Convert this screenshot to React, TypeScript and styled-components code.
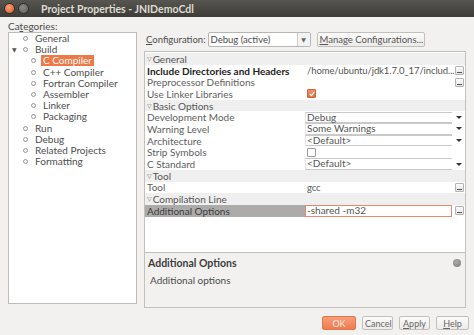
import styled, { createGlobalStyle, css } from "styled-components";

const GlobalStyle = createGlobalStyle`
  html, body {
    margin: 0;
    padding: 0;
    background: #f2f1f0;
  }
  body {
    font-family: Lato, "Open Sans", "DejaVu Sans", sans-serif;
    font-size: 9.5px;
    color: #4c4c4c;
  }
`;

const Window = styled.div`
  width: 474px;
  height: 335px;
  display: flex;
  flex-direction: column;
  background: #f2f1f0;
  overflow: hidden;
`;

const TitleBar = styled.div`
  height: 17px;
  flex-shrink: 0;
  display: flex;
  align-items: center;
  gap: 3px;
  padding-left: 4px;
  background: linear-gradient(#56554f, #3d3c38);
  color: #dfdbd2;
`;

const WinButton = styled.span<{ $close?: boolean }>`
  width: 9px;
  height: 9px;
  border-radius: 50%;
  background: ${(p) =>
    p.$close
      ? "radial-gradient(circle at 40% 35%, #f7a074, #e0582a)"
      : "radial-gradient(circle at 40% 35%, #8d8b85, #5f5d58)"};
  border: 1px solid #2e2d2a;
`;

const Title = styled.span`
  margin-left: 9px;
  font-weight: bold;
  font-size: 10.5px;
`;

const Content = styled.div`
  display: flex;
  gap: 7px;
  padding: 3px 8px 0 8px;
`;

const LeftCol = styled.div`
  width: 129px;
  flex-shrink: 0;
  display: flex;
  flex-direction: column;
`;

const Label = styled.div`
  height: 12px;
  line-height: 12px;
  font-size: 10px;
`;

const Mn = styled.span`
  text-decoration: underline;
`;

const TreeBox = styled.div`
  height: 270px;
  background: #fff;
  border: 1px solid #bfbdba;
`;

const TreeItem = styled.div<{ $level: number }>`
  height: 11.2px;
  display: flex;
  align-items: center;
  padding-left: ${(p) => 14 + p.$level * 8}px;
  position: relative;
  font-size: 10px;
  color: #4e4e4e;
`;

const Expander = styled.span`
  position: absolute;
  left: 3px;
  font-size: 6px;
  color: #555;
`;

const Bullet = styled.span`
  width: 3px;
  height: 3px;
  border-radius: 50%;
  border: 1px solid #9a9a9a;
  margin-right: 5px;
`;

const ItemText = styled.span<{ $selected?: boolean }>`
  padding: 0 2px;
  line-height: 11px;
  ${(p) =>
    p.$selected &&
    css`
      background: #f07746;
      color: #fff;
    `}
`;

const RightCol = styled.div`
  flex: 1;
  min-width: 0;
  display: flex;
  flex-direction: column;
  padding-top: 12px;
`;

const ConfigRow = styled.div`
  height: 15px;
  display: flex;
  align-items: center;
  padding-left: 2px;
  font-size: 9.5px;
  white-space: nowrap;
`;

const Combo = styled.div`
  margin-left: 2px;
  width: 101px;
  height: 13px;
  flex-shrink: 0;
  display: flex;
  background: #fff;
  border: 1px solid #b8b6b3;
  border-radius: 2px;
`;

const ComboText = styled.span`
  flex: 1;
  padding-left: 2px;
  line-height: 13px;
`;

const ComboArrow = styled.span`
  width: 12px;
  border-left: 1px solid #cfcdca;
  background: #f3f3f3;
  display: flex;
  align-items: center;
  justify-content: center;
  font-size: 6px;
  color: #666;
`;

const Button = styled.button<{ $primary?: boolean }>`
  height: 15px;
  padding: 0 2px;
  font-family: inherit;
  font-size: 10px;
  color: #555;
  white-space: nowrap;
  border: 1px solid #c2c0bd;
  border-radius: 2px;
  background: linear-gradient(#fbfbfa, #ecebe9);
  ${(p) =>
    p.$primary &&
    css`
      color: #fde9df;
      border-color: #e2764d;
      background: linear-gradient(#f6a07b, #ef7b4f);
    `}
`;

const ManageButton = styled(Button)`
  margin-left: 6px;
  width: 108px;
  flex-shrink: 0;
  font-size: 9.5px;
`;

const Sheet = styled.div`
  margin-top: 4px;
  height: 199px;
  background: #fff;
  border: 1px solid #c3c1be;
  padding-top: 1px;
`;

const Row = styled.div<{ $kind?: "header" | "selected" }>`
  height: 11.7px;
  display: grid;
  grid-template-columns: 160px 148px 1fr;
  align-items: center;
  background: ${(p) => (p.$kind === "header" ? "#efefef" : "#fff")};
`;

const NameCell = styled.div<{ $bold?: boolean; $selected?: boolean }>`
  height: 100%;
  display: flex;
  align-items: center;
  padding-left: 2px;
  font-size: 10px;
  color: ${(p) => (p.$bold ? "#222" : "#5e5e5e")};
  font-weight: ${(p) => (p.$bold ? "bold" : "normal")};
  white-space: nowrap;
  overflow: hidden;
  ${(p) =>
    p.$selected &&
    css`
      background: #acabaa;
      color: #3a3a3a;
    `}
`;

const HeaderCell = styled.div`
  grid-column: 1 / 4;
  padding-left: 2px;
  font-size: 10px;
  color: #555;
`;

const Tri = styled.span`
  font-size: 6px;
  margin-right: 1px;
  position: relative;
  top: -2px;
  color: #777;
`;

const ValueText = styled.div`
  padding-left: 2px;
  font-size: 9.5px;
  letter-spacing: -0.1px;
  color: #555;
  white-space: nowrap;
`;

const ValueCombo = styled.div`
  height: 9.5px;
  line-height: 9.5px;
  border-top: 1px solid #c9c9c9;
  border-bottom: 1px solid #c9c9c9;
  border-left: 1px solid #e4e4e4;
  margin-right: 1px;
  padding-left: 1px;
  font-size: 10px;
  color: #555;
`;

const ValueField = styled.div`
  height: 9.5px;
  line-height: 9.5px;
  border: 1px solid #e58b6c;
  margin-right: 1px;
  padding-left: 1px;
  font-size: 10px;
  color: #555;
`;

const EndCell = styled.div`
  display: flex;
  justify-content: center;
  align-items: center;
`;

const Ellipsis = styled.span`
  width: 7px;
  height: 7px;
  border: 1px solid #b4b4b4;
  border-radius: 1px;
  background: linear-gradient(#fafafa, #e4e4e4);
  display: flex;
  align-items: flex-end;
  justify-content: center;
  &::after {
    content: "";
    width: 5px;
    height: 1px;
    margin-bottom: 1px;
    background: #555;
  }
`;

const DropArrow = styled.span`
  width: 0;
  height: 0;
  border-left: 3px solid transparent;
  border-right: 3px solid transparent;
  border-top: 3px solid #333;
`;

const Check = styled.span<{ $checked?: boolean }>`
  margin-left: 2px;
  width: 7px;
  height: 7px;
  border: 1px solid ${(p) => (p.$checked ? "#c9663f" : "#9c9c9c")};
  border-radius: 1px;
  background: ${(p) => (p.$checked ? "linear-gradient(#f29270, #e36d45)" : "#fff")};
  display: flex;
  align-items: center;
  justify-content: center;
`;

const Desc = styled.div`
  height: 50px;
  border: 1px solid #c3c1be;
  border-top: none;
  display: flex;
  justify-content: space-between;
  padding: 4px 4px 0 3px;
`;

const DescTitle = styled.div`
  font-weight: bold;
  font-size: 10.5px;
  color: #3c3c3c;
`;

const DescText = styled.div`
  margin-top: 5px;
  padding-left: 2px;
  font-size: 10px;
  color: #4c4c4c;
`;

const HelpDot = styled.span`
  width: 8px;
  height: 8px;
  margin-top: 2px;
  border-radius: 50%;
  background: radial-gradient(circle at 40% 35%, #aaa, #7b7b7b);
`;

const Footer = styled.div`
  flex: 1;
  display: flex;
  justify-content: flex-end;
  align-items: flex-end;
  gap: 6px;
  padding: 0 5px 5px 0;
`;

const FooterButton = styled(Button)<{ $w: number }>`
  height: 14px;
  width: ${(p) => p.$w}px;
  font-size: 9px;
  color: #666;
  ${(p) =>
    p.$primary &&
    css`
      color: #fde9df;
    `}
`;

type Prop =
  | { kind: "header"; name: string }
  | {
      kind: "prop";
      name: string;
      bold?: boolean;
      selected?: boolean;
      value?: string;
      type: "text" | "combo" | "check" | "field";
      checked?: boolean;
      more?: boolean;
    };

const props: Prop[] = [
  { kind: "header", name: "General" },
  {
    kind: "prop",
    name: "Include Directories and Headers",
    bold: true,
    type: "text",
    value: "/home/ubuntu/jdk1.7.0_17/includ...",
    more: true,
  },
  { kind: "prop", name: "Preprocessor Definitions", type: "text", value: "", more: true },
  { kind: "prop", name: "Use Linker Libraries", type: "check", checked: true },
  { kind: "header", name: "Basic Options" },
  { kind: "prop", name: "Development Mode", type: "combo", value: "Debug" },
  { kind: "prop", name: "Warning Level", type: "combo", value: "Some Warnings" },
  { kind: "prop", name: "Architecture", type: "combo", value: "<Default>" },
  { kind: "prop", name: "Strip Symbols", type: "check" },
  { kind: "prop", name: "C Standard", type: "combo", value: "<Default>" },
  { kind: "header", name: "Tool" },
  { kind: "prop", name: "Tool", type: "text", value: "gcc", more: true },
  { kind: "header", name: "Compilation Line" },
  {
    kind: "prop",
    name: "Additional Options",
    selected: true,
    type: "field",
    value: "-shared -m32",
    more: true,
  },
];

const tree: { label: string; level: number; expand?: boolean; selected?: boolean }[] = [
  { label: "General", level: 0 },
  { label: "Build", level: 0, expand: true },
  { label: "C Compiler", level: 1, selected: true },
  { label: "C++ Compiler", level: 1 },
  { label: "Fortran Compiler", level: 1 },
  { label: "Assembler", level: 1 },
  { label: "Linker", level: 1 },
  { label: "Packaging", level: 1 },
  { label: "Run", level: 0 },
  { label: "Debug", level: 0 },
  { label: "Related Projects", level: 0 },
  { label: "Formatting", level: 0 },
];

const CheckMark = () => (
  <svg width="6" height="6" viewBox="0 0 6 6">
    <path d="M0.8 3 L2.4 4.6 L5.2 1.2" stroke="#fff" strokeWidth="1.2" fill="none" />
  </svg>
);

const App = () => {
  return (
    <Window>
      <GlobalStyle />
      <TitleBar>
        <WinButton $close />
        <WinButton />
        <Title>Project Properties - JNIDemoCdl</Title>
      </TitleBar>
      <Content>
        <LeftCol>
          <Label>
            Ca<Mn>t</Mn>egories:
          </Label>
          <TreeBox>
            {tree.map((t) => (
              <TreeItem key={t.label} $level={t.level}>
                {t.expand && <Expander>▼</Expander>}
                <Bullet />
                <ItemText $selected={t.selected}>{t.label}</ItemText>
              </TreeItem>
            ))}
          </TreeBox>
        </LeftCol>
        <RightCol>
          <ConfigRow>
            <span>
              <Mn>C</Mn>onfiguration:
            </span>
            <Combo>
              <ComboText>Debug (active)</ComboText>
              <ComboArrow>▼</ComboArrow>
            </Combo>
            <ManageButton>
              <Mn>M</Mn>anage Configurations...
            </ManageButton>
          </ConfigRow>
          <Sheet>
            {props.map((p, i) =>
              p.kind === "header" ? (
                <Row key={i} $kind="header">
                  <HeaderCell>
                    <Tri>▽</Tri>
                    {p.name}
                  </HeaderCell>
                </Row>
              ) : (
                <Row key={i} $kind={p.selected ? "selected" : undefined}>
                  <NameCell $bold={p.bold} $selected={p.selected}>
                    {p.name}
                  </NameCell>
                  {p.type === "text" && <ValueText>{p.value}</ValueText>}
                  {p.type === "combo" && <ValueCombo>{p.value}</ValueCombo>}
                  {p.type === "field" && <ValueField>{p.value}</ValueField>}
                  {p.type === "check" && (
                    <div>
                      <Check $checked={p.checked}>{p.checked && <CheckMark />}</Check>
                    </div>
                  )}
                  <EndCell>
                    {p.more && <Ellipsis />}
                    {p.type === "combo" && <DropArrow />}
                  </EndCell>
                </Row>
              )
            )}
          </Sheet>
          <Desc>
            <div>
              <DescTitle>Additional Options</DescTitle>
              <DescText>Additional options</DescText>
            </div>
            <HelpDot />
          </Desc>
        </RightCol>
      </Content>
      <Footer>
        <FooterButton $primary $w={34}>
          OK
        </FooterButton>
        <FooterButton $w={31}>Cancel</FooterButton>
        <FooterButton $w={31}>
          <Mn>A</Mn>pply
        </FooterButton>
        <FooterButton $w={33}>
          <Mn>H</Mn>elp
        </FooterButton>
      </Footer>
    </Window>
  );
};

export default App;
